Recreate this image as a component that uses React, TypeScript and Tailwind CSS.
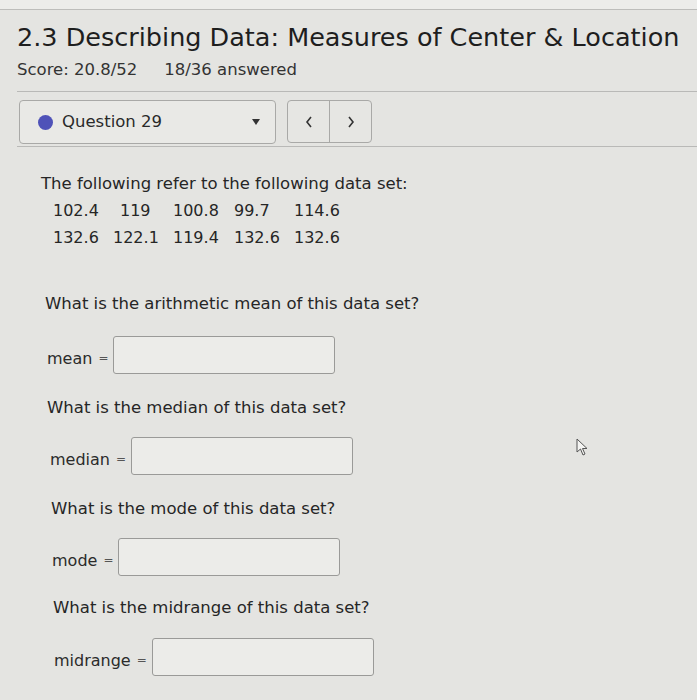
import React from "react";

const rows = [
  ["102.4", "119", "100.8", "99.7", "114.6"],
  ["132.6", "122.1", "119.4", "132.6", "132.6"],
];

function Answer({ label, indent }: { label: string; indent: string }) {
  return (
    <div className={`flex items-end ${indent}`}>
      <span className="text-[16px] leading-[19px] pb-[6px] text-[#2b2b2b]">{label}</span>
      <span className="text-[12px] leading-[19px] pb-[6px] text-[#555] ml-[6px] mr-[5px]">=</span>
      <div className="w-[222px] h-[38px] bg-[#ecece9] border border-[#9a9a98] rounded-[3px]" />
    </div>
  );
}

export default function App() {
  return (
    <div className="w-[697px] h-[700px] overflow-hidden bg-[#e4e4e1] text-[#222] font-['DejaVu_Sans',sans-serif]">
      <div className="h-[10px] bg-[#ececea] border-b border-[#bdbdbb]" />

      <div className="pl-[17px]">
        <h1 className="mt-[10px] text-[25.5px] leading-[34px] text-[#1e1e1e] whitespace-nowrap">
          2.3 Describing Data: Measures of Center &amp; Location
        </h1>
        <div className="mt-[5px] flex gap-[27px] text-[16.5px] leading-[22px] text-[#333]">
          <span>Score: 20.8/52</span>
          <span>18/36 answered</span>
        </div>

        <div className="mt-[10px] border-t border-[#b9b9b7]" />

        <div className="mt-[8px] ml-[2px] flex gap-[11px]">
          <div className="w-[257px] h-[44px] rounded-[4px] border border-[#a9a9a7] bg-[#e9e9e6] flex items-center px-[18px]">
            <span className="w-[15px] h-[15px] rounded-full bg-[#4f52b8] mr-[9px]" />
            <span className="text-[16.5px] text-[#2a2a2a]">Question 29</span>
            <svg className="ml-auto mr-[-4px]" width="10" height="8" viewBox="0 0 10 8">
              <path d="M1 1 H9 L5 7 Z" fill="#333" />
            </svg>
          </div>
          <div className="w-[85px] h-[43px] rounded-[4px] border border-[#a9a9a7] bg-[#e6e6e3] flex">
            <div className="flex-1 flex items-center justify-center border-r border-[#a9a9a7]">
              <svg width="10" height="14" viewBox="0 0 10 14">
                <path d="M7 2 L3 7 L7 12" fill="none" stroke="#333" strokeWidth="1.6" />
              </svg>
            </div>
            <div className="flex-1 flex items-center justify-center">
              <svg width="10" height="14" viewBox="0 0 10 14">
                <path d="M3 2 L7 7 L3 12" fill="none" stroke="#333" strokeWidth="1.6" />
              </svg>
            </div>
          </div>
        </div>

        <div className="mt-[2px] border-t border-[#b9b9b7]" />
      </div>

      <div className="relative pt-[25px] text-[16.5px] text-[#262626]">
        <p className="ml-[41px] leading-[24px]">The following refer to the following data set:</p>
        <div className="ml-[53px] mt-[1px] text-[16px]">
          {rows.map((r, i) => (
            <div key={i} className="grid grid-cols-[60px_60px_61px_60px_60px] leading-[27px]">
              {r.map((v, j) => (
                <span key={j} className={i === 0 && j === 1 ? "pl-[7px]" : ""}>
                  {v}
                </span>
              ))}
            </div>
          ))}
        </div>

        <p className="ml-[45px] mt-[41px] leading-[24px]">What is the arithmetic mean of this data set?</p>
        <div className="mt-[20px]">
          <Answer label="mean" indent="ml-[47px]" />
        </div>

        <p className="ml-[47px] mt-[22px] leading-[24px]">What is the median of this data set?</p>
        <div className="mt-[17px]">
          <Answer label="median" indent="ml-[50px]" />
        </div>

        <p className="ml-[51px] mt-[22px] leading-[24px]">What is the mode of this data set?</p>
        <div className="mt-[17px]">
          <Answer label="mode" indent="ml-[52px]" />
        </div>

        <p className="ml-[53px] mt-[20px] leading-[24px]">What is the midrange of this data set?</p>
        <div className="mt-[18px]">
          <Answer label="midrange" indent="ml-[54px]" />
        </div>

        <svg className="absolute left-[575px] top-[290px]" width="16" height="20" viewBox="0 0 16 20">
          <path d="M2 2 L2 15 L5.5 12 L8 18 L10 17 L7.5 11.5 L12 11.5 Z" fill="#f4f4f2" stroke="#555" strokeWidth="1" />
        </svg>
      </div>
    </div>
  );
}
